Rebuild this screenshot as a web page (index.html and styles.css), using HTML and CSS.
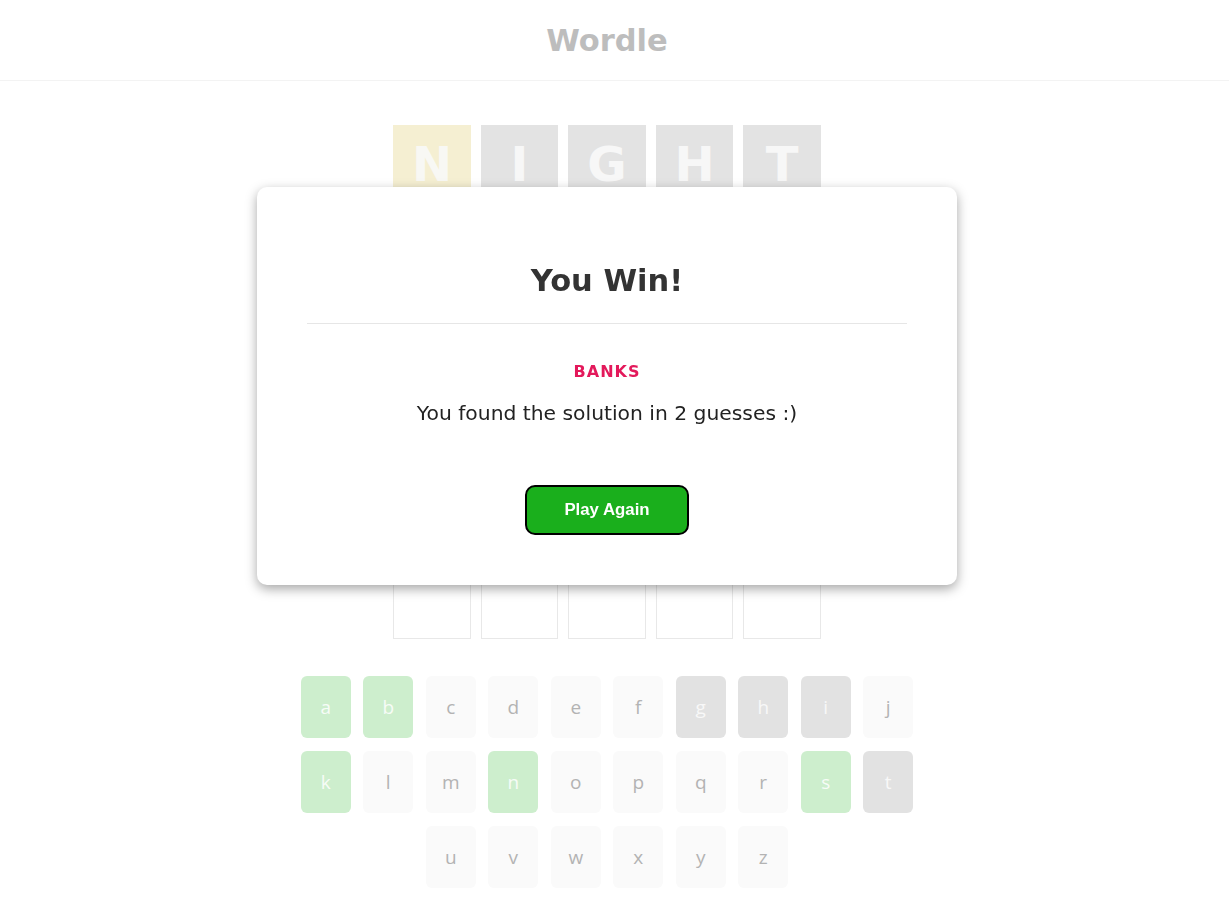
FILE: index.html
```html
<!DOCTYPE html>
<html lang="en">
<head>
<meta charset="utf-8">
<title>Wordle</title>
<link rel="stylesheet" href="styles.css">
</head>
<body>
<header class="header"><h1 class="title">Wordle</h1></header>
<main class="app">
  <div class="board">
    <div class="row">
      <div class="tile present">N</div><div class="tile absent">I</div><div class="tile absent">G</div><div class="tile absent">H</div><div class="tile absent">T</div>
    </div>
    <div class="row">
      <div class="tile correct"></div><div class="tile correct"></div><div class="tile correct"></div><div class="tile correct"></div><div class="tile correct"></div>
    </div>
    <div class="row"><div class="tile"></div><div class="tile"></div><div class="tile"></div><div class="tile"></div><div class="tile"></div></div>
    <div class="row"><div class="tile"></div><div class="tile"></div><div class="tile"></div><div class="tile"></div><div class="tile"></div></div>
    <div class="row"><div class="tile"></div><div class="tile"></div><div class="tile"></div><div class="tile"></div><div class="tile"></div></div>
    <div class="row"><div class="tile"></div><div class="tile"></div><div class="tile"></div><div class="tile"></div><div class="tile"></div></div>
  </div>
  <div class="keyboard">
    <div class="krow">
      <div class="key k-correct">a</div><div class="key k-correct">b</div><div class="key">c</div><div class="key">d</div><div class="key">e</div><div class="key">f</div><div class="key k-absent">g</div><div class="key k-absent">h</div><div class="key k-absent">i</div><div class="key">j</div>
    </div>
    <div class="krow">
      <div class="key k-correct">k</div><div class="key">l</div><div class="key">m</div><div class="key k-correct">n</div><div class="key">o</div><div class="key">p</div><div class="key">q</div><div class="key">r</div><div class="key k-correct">s</div><div class="key k-absent">t</div>
    </div>
    <div class="krow">
      <div class="key">u</div><div class="key">v</div><div class="key">w</div><div class="key">x</div><div class="key">y</div><div class="key">z</div>
    </div>
  </div>
</main>
<div class="overlay">
  <div class="modal">
    <h2 class="modal-title">You Win!</h2>
    <hr class="divider">
    <p class="solution">BANKS</p>
    <p class="message">You found the solution in 2 guesses :)</p>
    <button class="play">Play Again</button>
  </div>
</div>
</body>
</html>
```
FILE: styles.css
```css
html, body {
  margin: 0;
  padding: 0;
  background: #ffffff;
  font-family: "DejaVu Sans", Verdana, sans-serif;
}
.header {
  height: 80px;
  border-bottom: 1px solid #f3f3f3;
  display: flex;
  align-items: center;
  justify-content: center;
  padding-right: 15px;
}
.title {
  margin: 0;
  font-size: 30.5px;
  font-weight: bold;
  color: #bdbdbd;
}
.app {
  padding-right: 15px;
  display: flex;
  flex-direction: column;
  align-items: center;
}
.board {
  margin-top: 44px;
  display: flex;
  flex-direction: column;
  gap: 10px;
}
.row {
  display: flex;
  gap: 10px;
}
.tile {
  box-sizing: border-box;
  width: 77.5px;
  height: 77.3px;
  border: 1px solid #e8e8e8;
  background: #ffffff;
  display: flex;
  align-items: center;
  justify-content: center;
  font-size: 48px;
  font-weight: bold;
  color: #f8f8f4;
}
.tile.present { background: #f5efd2; border-color: #f5efd2; }
.tile.absent { background: #e3e3e3; border-color: #e3e3e3; color: #f7f7f7; }
.tile.correct { background: #cdeecd; border-color: #cdeecd; }
.keyboard {
  margin-top: 37px;
  display: flex;
  flex-direction: column;
  align-items: center;
  gap: 13px;
}
.krow {
  display: flex;
  gap: 12.5px;
}
.key {
  width: 50px;
  height: 62px;
  border-radius: 6px;
  background: #fafafa;
  color: #b3b3b3;
  display: flex;
  align-items: center;
  justify-content: center;
  font-family: "Open Sans", "Noto Sans", sans-serif;
  font-size: 19px;
}
.key.k-correct { background: #cdeecd; color: #f7fcf7; }
.key.k-absent { background: #e2e2e2; color: #f8f8f8; }
.overlay {
  position: fixed;
  inset: 0;
  display: flex;
  justify-content: center;
  padding-right: 15px;
}
.modal {
  box-sizing: border-box;
  margin-top: 187px;
  width: 700px;
  height: 398px;
  background: #ffffff;
  border-radius: 10px;
  box-shadow: 0 4px 12px rgba(0, 0, 0, 0.35);
  padding: 0 50px;
  display: flex;
  flex-direction: column;
  align-items: center;
}
.modal-title {
  margin: 76px 0 0;
  font-size: 30.5px;
  line-height: 36px;
  font-weight: bold;
  color: #333333;
}
.divider {
  align-self: stretch;
  margin: 24px 0 0;
  border: 0;
  border-top: 1px solid #e6e6e6;
}
.solution {
  margin: 38px 0 0;
  font-size: 16px;
  line-height: 20px;
  font-weight: bold;
  letter-spacing: 1px;
  color: #e3195b;
}
.message {
  margin: 18px 0 0;
  font-size: 20.3px;
  line-height: 26px;
  color: #222222;
}
.play {
  margin-top: 59px;
  width: 164px;
  height: 50px;
  box-sizing: border-box;
  background: #1aaf1c;
  border: 2px solid #000000;
  border-radius: 10px;
  color: #ffffff;
  font-family: "Liberation Sans", Arial, sans-serif;
  font-weight: bold;
  font-size: 16.8px;
}
```
